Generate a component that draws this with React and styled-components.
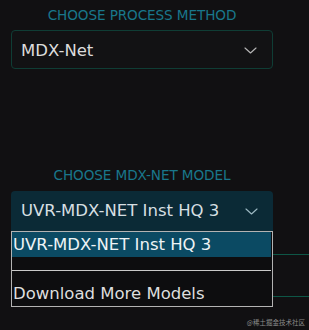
import React from "react";
import styled, { createGlobalStyle } from "styled-components";

const Global = createGlobalStyle`
  html, body {
    margin: 0;
    padding: 0;
    height: 330px;
    overflow: hidden;
    background: #111012;
  }
  body {
    font-family: "DejaVu Sans", "Liberation Sans", sans-serif;
  }
`;

const Page = styled.div`
  position: relative;
  height: 330px;
  padding-left: 11px;
  box-sizing: border-box;
`;

const Column = styled.div`
  width: 262px;
  display: flex;
  flex-direction: column;
`;

const Title = styled.div`
  margin-top: ${(p) => p.$top}px;
  font-size: 13.6px;
  line-height: 16px;
  color: #19778b;
  text-align: center;
  text-transform: uppercase;
  letter-spacing: -0.1px;
`;

const Select = styled.div`
  margin-top: ${(p) => p.$top}px;
  display: flex;
  align-items: flex-start;
  justify-content: space-between;
  box-sizing: border-box;
  border-radius: 4px;
  font-size: 16.5px;
  line-height: 20px;
  padding: ${(p) => (p.$filled ? "10px 15px 10px 10px" : "10px 15px 7px 9px")};
  height: ${(p) => (p.$filled ? 40 : 39)}px;
  border: ${(p) => (p.$filled ? "none" : "1px solid #0f3d35")};
  background: ${(p) => (p.$filled ? "#0b2a36" : "#121214")};
  color: ${(p) => (p.$filled ? "#d6dfe2" : "#dcdcdc")};
  border-bottom-left-radius: ${(p) => (p.$filled ? 0 : 4)}px;
  border-bottom-right-radius: ${(p) => (p.$filled ? 0 : 4)}px;
`;

const Chevron = styled.svg`
  margin-top: ${(p) => p.$dy}px;
  flex: none;
`;

const SelectWrap = styled.div`
  position: relative;
  z-index: 2;
`;

const Dropdown = styled.div`
  position: absolute;
  top: 100%;
  left: 0;
  width: 262px;
  box-sizing: border-box;
  border: 1px solid #b3b3b3;
  background: #0d0d0f;
  display: flex;
  flex-direction: column;
`;

const Item = styled.div`
  height: 25px;
  line-height: 25px;
  font-size: 16.5px;
  padding: 0 1px;
  margin-right: 1px;
  color: ${(p) => (p.$active ? "#eef3f5" : "#dedede")};
  background: ${(p) => (p.$active ? "#0b4a63" : "transparent")};
  white-space: nowrap;
`;

const Separator = styled.div`
  height: 1px;
  margin: 13px 1px 10px 0;
  background: #c9c9c9;
`;

const UnderRows = styled.div`
  display: flex;
  flex-direction: column;
`;

const UnderRow = styled.div`
  height: ${(p) => p.$h}px;
  border-bottom: 1px solid #0e5646;
`;

const Watermark = styled.div`
  position: absolute;
  right: 4px;
  bottom: 4px;
  font-family: "Noto Sans CJK SC", sans-serif;
  font-size: 6.5px;
  line-height: 8px;
  color: #8c8c8c;
`;

const ChevronIcon = ({ color, dy }) => (
  <Chevron $dy={dy} width="13" height="7" viewBox="0 0 13 7">
    <polyline
      points="1,1 6.5,6 12,1"
      fill="none"
      stroke={color}
      strokeWidth="1.15"
      strokeLinecap="round"
      strokeLinejoin="round"
    />
  </Chevron>
);

export default function App() {
  return (
    <>
      <Global />
      <Page>
        <Column>
          <Title $top={7}>Choose Process Method</Title>
          <Select $top={7}>
            <span>MDX-Net</span>
            <ChevronIcon color="#b5b5b5" dy={6} />
          </Select>
          <Title $top={98}>Choose MDX-NET Model</Title>
          <SelectWrap>
            <Select $top={8} $filled>
              <span>UVR-MDX-NET Inst HQ 3</span>
              <ChevronIcon color="#9cb8c2" dy={7} />
            </Select>
            <Dropdown>
              <Item $active>UVR-MDX-NET Inst HQ 3</Item>
              <Separator />
              <Item>Download More Models</Item>
            </Dropdown>
          </SelectWrap>
        </Column>
        <UnderRows>
          <UnderRow $h={23} />
          <UnderRow $h={41} />
        </UnderRows>
        <Watermark>@稀土掘金技术社区</Watermark>
      </Page>
    </>
  );
}
